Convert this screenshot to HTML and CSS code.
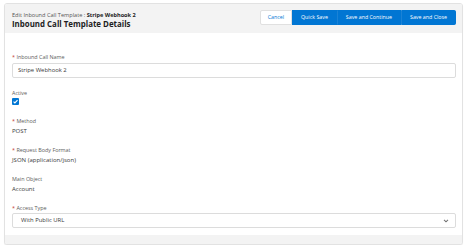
FILE: index.html
```html
<!DOCTYPE html>
<html>
<head>
<meta charset="utf-8">
<link rel="stylesheet" href="styles.css">
</head>
<body>
<div class="card">
  <div class="header">
    <div class="titles">
      <div class="sub">Edit Inbound Call Template : <b>Stripe Webhook 2</b></div>
      <div class="title">Inbound Call Template Details</div>
    </div>
    <div class="buttons">
      <button class="btn neutral">Cancel</button>
      <button class="btn brand">Quick Save</button>
      <button class="btn brand">Save and Continue</button>
      <button class="btn brand">Save and Close</button>
    </div>
  </div>
  <div class="body">
    <div class="field first">
      <div class="label"><span class="req">*</span> Inbound Call Name</div>
      <div class="input">Stripe Webhook 2</div>
    </div>
    <div class="field f-active">
      <div class="label">Active</div>
      <span class="checkbox"><svg viewBox="0 0 8 8" width="7" height="7"><path d="M1.8 4.1 L3.3 5.6 L6.3 2.4" fill="none" stroke="#fff" stroke-width="1.3"/></svg></span>
    </div>
    <div class="field f-method">
      <div class="label"><span class="req">*</span> Method</div>
      <div class="value">POST</div>
    </div>
    <div class="field">
      <div class="label"><span class="req">*</span> Request Body Format</div>
      <div class="value">JSON (application/json)</div>
    </div>
    <div class="field">
      <div class="label">Main Object</div>
      <div class="value">Account</div>
    </div>
    <div class="field f-access">
      <div class="label"><span class="req">*</span> Access Type</div>
      <div class="select"><span class="sel-text">With Public URL</span><svg class="chev" viewBox="0 0 8 6" width="6" height="4"><path d="M1 1.2 L4 4.2 L7 1.2" fill="none" stroke="#747474" stroke-width="1.6"/></svg></div>
    </div>
  </div>
  <div class="footer"></div>
</div>
</body>
</html>
```
FILE: styles.css
```css
html, body {
  margin: 0;
  padding: 0;
  background: #ffffff;
}
body {
  font-family: "Open Sans", "Noto Sans", sans-serif;
  color: #181818;
}
.card {
  margin: 3px 11px 0 4px;
  width: 457px;
  border: 1px solid #e2e2e2;
  border-radius: 3px;
  background: #fff;
  box-shadow: 0 1px 1px rgba(0,0,0,0.06);
  overflow: hidden;
}
.header {
  background: #f3f3f3;
  height: 29px;
  padding: 0 6px 0 7px;
  display: flex;
  justify-content: space-between;
  align-items: flex-start;
}
.titles {
  padding-top: 7px;
}
.sub {
  font-size: 5.6px;
  line-height: 8px;
  color: #555;
}
.sub b {
  color: #222;
  font-weight: 700;
}
.title {
  font-size: 7.9px;
  line-height: 10px;
  font-weight: 700;
  color: #1e1e1e;
}
.buttons {
  display: flex;
  margin-top: 6px;
}
.btn {
  font-family: inherit;
  font-size: 5.3px;
  height: 15px;
  padding: 0 8px;
  margin: 0;
  border: 1px solid #0176d3;
  background: #0176d3;
  color: #fff;
  line-height: 13px;
}
.btn.neutral {
  background: #fff;
  color: #0176d3;
  border-color: #e0e0e0;
  border-radius: 2px 0 0 2px;
  width: 32px;
  padding: 0;
}
.btn.brand + .btn.brand {
  border-left: 1px solid #1a82d6;
}
.btn.brand:last-child {
  border-radius: 0 2px 2px 0;
}
.body {
  padding: 20px 6px 0 7px;
}
.field {
  margin-top: 10px;
}
.field.first {
  margin-top: 0;
}
.field.f-active {
  margin-top: 11px;
}
.field.f-method {
  margin-top: 12px;
}
.field.f-access {
  margin-top: 10px;
}
.label {
  font-size: 5.4px;
  line-height: 8px;
  color: #5c5c5c;
}
.req {
  color: #c23934;
}
.value {
  margin-top: 1px;
  font-size: 6px;
  line-height: 10px;
  color: #3a3a3a;
}
.input, .select {
  margin-top: 2px;
  height: 13px;
  border: 1px solid #dcdcdc;
  border-radius: 2px;
  font-size: 5.9px;
  line-height: 13px;
  padding: 0 6px 0 5px;
  color: #3a3a3a;
  display: flex;
  align-items: center;
  justify-content: space-between;
}
.select {
  margin-top: 1px;
  padding-left: 8px;
}
.chev {
  display: block;
}
.checkbox {
  display: flex;
  align-items: center;
  justify-content: center;
  margin-top: 1px;
  width: 7px;
  height: 7px;
  background: #0176d3;
  border-radius: 1px;
}
.checkbox svg {
  display: block;
}
.footer {
  margin-top: 7px;
  height: 9px;
  background: #f3f3f3;
}
```
